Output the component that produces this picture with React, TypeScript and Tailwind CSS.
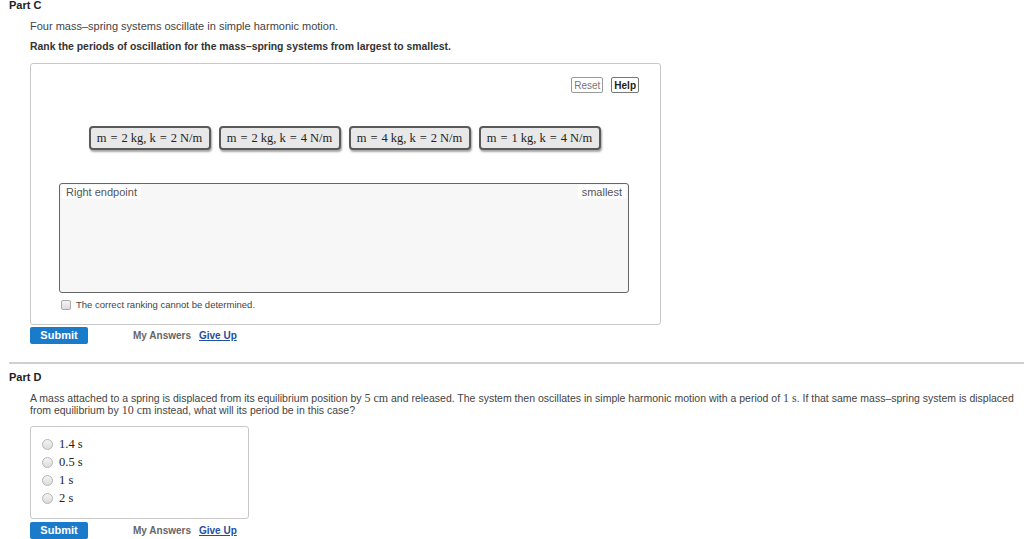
import React from "react";

const chips = [
  ["2", "2"],
  ["2", "4"],
  ["4", "2"],
  ["1", "4"],
];

function Eq() {
  return <span className="mx-[4px]">=</span>;
}

function Chip({ m, k }: { m: string; k: string }) {
  return (
    <div className="flex h-[24px] w-[122px] items-center justify-center rounded-[4px] border-2 border-[#5a5a5a] bg-[#e8e8e8] shadow-[1px_2px_2px_rgba(0,0,0,0.35)] text-[12.5px] text-[#222] [font-family:'Liberation_Serif',serif] whitespace-pre">
      <span>m</span>
      <Eq />
      <span>{m}</span>
      <span className="ml-[3px]">kg,</span>
      <span className="ml-[3px]">k</span>
      <Eq />
      <span>{k}</span>
      <span className="ml-[3px]">N/m</span>
    </div>
  );
}

function SubmitRow() {
  return (
    <div className="flex items-center">
      <button className="h-[17px] w-[58px] rounded-[2px] bg-[#1b7bcb] text-[11px] font-bold text-white leading-[17px]">
        Submit
      </button>
      <span className="ml-[45px] text-[10px] font-bold text-[#666]">My Answers</span>
      <span className="ml-[8px] text-[10px] font-bold text-[#1f4fa0] underline">Give Up</span>
    </div>
  );
}

function Radio({ label }: { label: string }) {
  return (
    <div className="flex h-[18px] items-center">
      <span className="h-[11px] w-[11px] rounded-full border border-[#b5b5b5] bg-gradient-to-b from-[#f4f4f4] to-[#dcdcdc]" />
      <span className="ml-[6px] text-[12.5px] text-[#222] [font-family:'Liberation_Serif',serif]">{label}</span>
    </div>
  );
}

const M = ({ children }: { children: React.ReactNode }) => (
  <span className="text-[12px] leading-none [font-family:'Liberation_Serif',serif]">{children}</span>
);

export default function App() {
  return (
    <div className="h-[539px] w-[1024px] overflow-hidden bg-white text-[#333] [font-family:'Liberation_Sans',Arial,sans-serif]">
      <div className="pl-[9px] text-[11px] font-bold leading-[10px] text-[#222]">Part C</div>
      <div className="pl-[30px]">
        <p className="mt-[10px] text-[11px] leading-[12px] text-[#444]">
          Four mass–spring systems oscillate in simple harmonic motion.
        </p>
        <p className="mt-[9px] text-[10.4px] font-bold leading-[12px] text-[#333]">
          Rank the periods of oscillation for the mass–spring systems from largest to smallest.
        </p>
        <div className="mt-[10px] flex h-[262px] w-[631px] flex-col rounded-[3px] border border-[#c8c8c8]">
          <div className="mt-[13px] flex justify-end gap-[8px] pr-[21px]">
            <span className="flex h-[16px] items-center rounded-[2px] border border-[#999] px-[2px] text-[10px] text-[#777]">Reset</span>
            <span className="flex h-[16px] items-center rounded-[2px] border border-[#777] px-[2px] text-[10px] font-bold text-[#222]">Help</span>
          </div>
          <div className="mt-[33px] flex justify-center gap-[8px] pr-[2px]">
            {chips.map(([m, k], i) => (
              <Chip key={i} m={m} k={k} />
            ))}
          </div>
          <div className="ml-[28px] mt-[33px] flex h-[110px] w-[570px] items-start justify-between rounded-[3px] border border-[#666] bg-[#f7f7f7] px-[2px] pt-[1px]">
            <span className="bg-white px-[4px] text-[11px] leading-[14px] text-[#555]">Right endpoint</span>
            <span className="bg-white px-[4px] text-[11px] leading-[14px] text-[#555]">smallest</span>
          </div>
          <div className="ml-[30px] mt-[5px] flex items-center">
            <span className="h-[10px] w-[10px] rounded-[2px] border border-[#aaa] bg-gradient-to-b from-[#f4f4f4] to-[#dcdcdc]" />
            <span className="ml-[5px] text-[9.5px] text-[#444]">The correct ranking cannot be determined.</span>
          </div>
        </div>
        <div className="mt-[2px]">
          <SubmitRow />
        </div>
      </div>
      <div className="ml-[9px] mt-[18px] h-[2px] bg-[#d0d0d0]" />
      <div className="mt-[7px] pl-[9px] text-[11px] font-bold leading-[12px] text-[#222]">Part D</div>
      <div className="pl-[30px]">
        <p className="mt-[9px] text-[10.5px] leading-[12px] text-[#444]">
          A mass attached to a spring is displaced from its equilibrium position by <M>5 cm</M> and released. The system then oscillates in simple harmonic motion with a period of <M>1 s</M>. If that same mass–spring system is displaced from equilibrium by <M>10 cm</M> instead, what will its period be in this case?
        </p>
        <div className="mt-[10px] flex h-[93px] w-[219px] flex-col rounded-[3px] border border-[#c8c8c8] pl-[11px] pt-[8px]">
          <Radio label="1.4 s" />
          <Radio label="0.5 s" />
          <Radio label="1 s" />
          <Radio label="2 s" />
        </div>
        <div className="mt-[3px]">
          <SubmitRow />
        </div>
      </div>
    </div>
  );
}
